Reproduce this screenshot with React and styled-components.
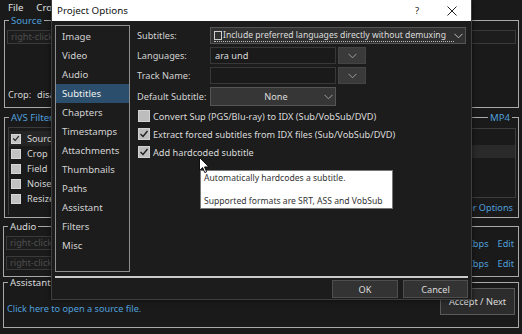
import React from 'react';
import styled, { createGlobalStyle } from 'styled-components';

const FONT = `"Noto Sans", "Open Sans", "Liberation Sans", sans-serif`;

const GlobalStyle = createGlobalStyle`
  html, body { margin: 0; padding: 0; background: #1a1a1a; }
  body { font-family: ${FONT}; }
`;

const Screen = styled.div`
  position: relative;
  width: 522px;
  height: 334px;
  overflow: hidden;
  background: #1a1a1a;
  color: #d6d6d6;
  font-family: ${FONT};
  font-size: 9.2px;
  display: flex;
  flex-direction: column;
`;

const MenuBar = styled.div`
  height: 15px;
  display: flex;
  align-items: center;
  gap: 13px;
  padding-left: 8px;
  font-size: 9.6px;
  color: #e2e2e2;
`;

const MainGrid = styled.div`
  display: grid;
  grid-template-columns: 250px 1fr 60px;
  grid-template-rows: 93px 106px;
  row-gap: 4px;
  column-gap: 6px;
  padding: 0 3px 0 4px;
`;

const Group = styled.fieldset`
  margin: 0;
  padding: ${p => p.$pad || '1px 2px 2px'};
  border: 1px solid #a9a9a9;
  min-width: 0;
  box-sizing: border-box;
  display: flex;
  flex-direction: column;
  grid-column: ${p => p.$span || 'auto'};
`;

const Legend = styled.legend`
  padding: 0 2px;
  margin-left: ${p => p.$offset || 2}px;
  line-height: 11px;
  font-size: 9.6px;
  color: ${p => (p.$blue ? '#4f9fdb' : '#dadada')};
`;

const TextField = styled.div`
  height: 14px;
  box-sizing: border-box;
  border: 1px solid #3a3a3a;
  background: #1d1d1d;
  color: #4e4e4e;
  padding-left: 3px;
  line-height: 12px;
  white-space: nowrap;
  overflow: hidden;
  width: ${p => p.$w || 'auto'};
  margin-top: ${p => p.$mt || 0}px;
`;

const CropRow = styled.div`
  margin-top: auto;
  margin-bottom: 4px;
  display: flex;
  gap: 6px;
  padding-left: 1px;
`;

const FilterList = styled.div`
  flex: 1;
  margin: 3px 0 0 1px;
  border-left: 1px solid #3c3c3c;
  border-top: 1px solid #3c3c3c;
  padding-top: 3px;
`;

const FilterItem = styled.div`
  height: 15px;
  display: flex;
  align-items: center;
  gap: 6px;
  padding-left: 2px;
  background: ${p => (p.$active ? '#252525' : 'transparent')};
`;

const SmallBox = styled.span`
  width: 10px;
  height: 10px;
  box-sizing: border-box;
  background: #c2c2c2;
  border: 1px solid #d6d6d6;
  display: flex;
  align-items: center;
  justify-content: center;
`;

const ContainerList = styled.div`
  flex: 1;
  margin-top: 4px;
  border: 1px solid #3c3c3c;
  padding-top: 16px;
`;

const ContainerRow = styled.div`
  height: 13px;
  background: #2a2a2a;
`;

const LinkText = styled.div`
  display: flex;
  justify-content: ${p => (p.$right ? 'flex-end' : 'flex-start')};
  color: #4f9fdb;
  white-space: nowrap;
  padding: ${p => p.$pad || '0'};
`;

const WideGroup = styled(Group)`
  margin: ${p => p.$margin || '0'};
  height: ${p => p.$h}px;
`;

const AudioLine = styled.div`
  display: flex;
  align-items: center;
  justify-content: space-between;
  height: 20px;
`;

const AudioInfo = styled.div`
  display: flex;
  gap: 9px;
  color: #4f9fdb;
  padding-right: 2px;
`;

const AssistantBody = styled.div`
  flex: 1;
  display: flex;
  align-items: center;
  justify-content: space-between;
  padding: 0 1px 4px 1px;
`;

const AcceptButton = styled.div`
  width: 75px;
  height: 27px;
  box-sizing: border-box;
  border: 1px solid #5a5a5a;
  background: #2c2c2c;
  color: #dcdcdc;
  display: flex;
  align-items: center;
  justify-content: center;
`;

/* ---------- dialog ---------- */

const Dialog = styled.div`
  position: absolute;
  left: 51px;
  top: 0;
  width: 421px;
  height: 300px;
  box-sizing: border-box;
  background: #1c1c1c;
  border: 1px solid #3e3e3e;
  border-top: none;
  display: flex;
  flex-direction: column;
  box-shadow: 0 0 5px rgba(0, 0, 0, 0.6);
`;

const TitleBar = styled.div`
  height: 21px;
  flex-shrink: 0;
  background: #ffffff;
  color: #111;
  display: flex;
  align-items: center;
  padding-left: 5px;
  font-size: 9.8px;
`;

const TitleText = styled.div`
  flex: 1;
`;

const TitleButton = styled.div`
  width: ${p => p.$w}px;
  display: flex;
  justify-content: center;
  align-items: center;
  color: #222;
  font-size: 9.5px;
`;

const DialogBody = styled.div`
  display: flex;
  gap: 7px;
  padding: 4px 3px 0 3px;
  height: 251px;
  box-sizing: border-box;
`;

const NavList = styled.div`
  width: 75px;
  height: 247px;
  flex-shrink: 0;
  box-sizing: border-box;
  border: 1px solid #8e8e8e;
  padding-top: 1px;
`;

const NavItem = styled.div`
  height: 19px;
  line-height: 19px;
  padding-left: 6px;
  font-size: 9.6px;
  color: ${p => (p.$active ? '#f0f0f0' : '#d2d2d2')};
  background: ${p => (p.$active ? '#2a4e6c' : 'transparent')};
`;

const Panel = styled.div`
  flex: 1;
  min-width: 0;
  display: flex;
  flex-direction: column;
  padding-top: 2px;
`;

const FormRow = styled.div`
  display: flex;
  align-items: center;
  height: ${p => p.$h || 17}px;
  margin-bottom: ${p => p.$mb ?? 3}px;
`;

const FieldLabel = styled.div`
  width: 73px;
  flex-shrink: 0;
  white-space: nowrap;
  color: #d2d2d2;
`;

const Combo = styled.div`
  flex: ${p => (p.$wide ? 1 : 'none')};
  min-width: 0;
  width: ${p => (p.$wide ? 'auto' : '126px')};
  height: 100%;
  box-sizing: border-box;
  border: 1px solid #555;
  background: ${p => (p.$wide ? '#303030' : '#363636')};
  display: flex;
  align-items: center;
  padding: 0 2px 0 3px;
  margin-right: ${p => (p.$wide ? 2 : 0)}px;
  color: #dcdcdc;
`;

const FocusText = styled.span`
  flex: 1;
  min-width: 0;
  display: flex;
  align-items: center;
  gap: 1px;
  white-space: nowrap;
  overflow: hidden;
  border-bottom: 1px dotted #bbb;
  line-height: 11px;
  font-size: 8.6px;
`;

const Square = styled.span`
  width: 6px;
  height: 7px;
  border: 1px solid #cfcfcf;
  flex-shrink: 0;
`;

const ComboValue = styled.span`
  flex: 1;
  text-align: center;
  padding-left: 14px;
`;

const Input = styled.div`
  width: 126px;
  height: 100%;
  box-sizing: border-box;
  border: 1px solid #383838;
  background: #1a1a1a;
  color: #dcdcdc;
  padding-left: 4px;
  display: flex;
  align-items: center;
`;

const MenuButton = styled.div`
  width: 28px;
  height: 100%;
  margin-left: 2px;
  background: #3a3a3a;
  border: 1px solid #444;
  box-sizing: border-box;
  display: flex;
  align-items: center;
  justify-content: center;
`;

const CheckRow = styled.div`
  display: flex;
  align-items: center;
  gap: 3px;
  height: 18px;
  padding-left: 1px;
  color: #dadada;
  white-space: nowrap;
`;

const CheckBox = styled.span`
  width: 12px;
  height: 12px;
  box-sizing: border-box;
  background: #bdbdbd;
  border: 1px solid #d2d2d2;
  display: flex;
  align-items: center;
  justify-content: center;
  flex-shrink: 0;
`;

const Separator = styled.div`
  height: 2px;
  background: #cacaca;
  margin: 4px 3px 0 3px;
`;

const ButtonRow = styled.div`
  display: flex;
  justify-content: flex-end;
  gap: 5px;
  padding: 2px 3px 0 0;
`;

const DialogButton = styled.div`
  width: ${p => p.$w}px;
  height: 18px;
  box-sizing: border-box;
  border: 1px solid #4e4e4e;
  background: #333;
  color: #dcdcdc;
  display: flex;
  align-items: center;
  justify-content: center;
`;

const Tooltip = styled.div`
  position: absolute;
  left: 200px;
  top: 170px;
  width: 193px;
  height: 39px;
  box-sizing: border-box;
  background: #fff;
  border: 1px solid #777;
  color: #333;
  font-size: 8.6px;
  padding: 2px 3px;
  line-height: 11.5px;
  white-space: nowrap;
`;

const Cursor = styled.svg`
  position: absolute;
  left: 199px;
  top: 157px;
`;

const Chevron = ({ color = '#a8a8a8' }) => (
  <svg width="9" height="6" viewBox="0 0 9 6">
    <polyline points="0.5,0.8 4.5,4.8 8.5,0.8" fill="none" stroke={color} strokeWidth="0.9" />
  </svg>
);

const Check = ({ size = 10 }) => (
  <svg width={size} height={size} viewBox="0 0 10 10">
    <polyline points="1.5,5 4,7.5 8.5,2" fill="none" stroke="#1e1e1e" strokeWidth="1.4" />
  </svg>
);

const navItems = ['Image', 'Video', 'Audio', 'Subtitles', 'Chapters', 'Timestamps', 'Attachments', 'Thumbnails', 'Paths', 'Assistant', 'Filters', 'Misc'];
const filters = [
  { name: 'Source', on: true },
  { name: 'Crop', on: false },
  { name: 'Field', on: false },
  { name: 'Noise', on: false },
  { name: 'Resize', on: false },
];

const App = () => {
  return (
    <Screen>
      <GlobalStyle />
      <MenuBar>
        <span>File</span>
        <span>Crop</span>
        <span>Preview</span>
        <span>Code</span>
      </MenuBar>

      <MainGrid>
        <Group>
          <Legend $blue>Source</Legend>
          <TextField $mt={3}>right-click for options</TextField>
          <CropRow>
            <span>Crop:</span>
            <span>disabled</span>
          </CropRow>
        </Group>
        <Group $span="2 / 4">
          <Legend $blue>Target</Legend>
          <TextField $mt={3}>&nbsp;</TextField>
        </Group>

        <Group>
          <Legend $blue>AVS Filters</Legend>
          <FilterList>
            {filters.map(f => (
              <FilterItem key={f.name} $active={f.on}>
                <SmallBox>{f.on && <Check size={9} />}</SmallBox>
                <span>{f.name}</span>
              </FilterItem>
            ))}
          </FilterList>
        </Group>
        <Group>
          <Legend $blue>x264</Legend>
        </Group>
        <Group>
          <Legend $blue $offset={26}>MP4</Legend>
          <ContainerList>
            <ContainerRow />
          </ContainerList>
          <LinkText $right $pad="3px 3px 1px 0">Container Options</LinkText>
        </Group>
      </MainGrid>

      <WideGroup $h={56} $margin="3px 3px 0 3px" $pad="1px 2px 2px">
        <Legend>Audio</Legend>
        <AudioLine>
          <TextField $w="200px">right-click for options</TextField>
          <AudioInfo><span>Kbps</span><span>Edit</span></AudioInfo>
        </AudioLine>
        <AudioLine>
          <TextField $w="200px">right-click for options</TextField>
          <AudioInfo><span>Kbps</span><span>Edit</span></AudioInfo>
        </AudioLine>
      </WideGroup>

      <WideGroup $h={51} $margin="0 3px 0 3px" $pad="0 2px">
        <Legend>Assistant</Legend>
        <AssistantBody>
          <LinkText $pad="14px 0 0 0">Click here to open a source file.</LinkText>
          <AcceptButton>Accept / Next</AcceptButton>
        </AssistantBody>
      </WideGroup>

      <Dialog>
        <TitleBar>
          <TitleText>Project Options</TitleText>
          <TitleButton $w={32}>?</TitleButton>
          <TitleButton $w={38}>
            <svg width="10" height="10" viewBox="0 0 10 10">
              <path d="M0.5 0.5 L9.5 9.5 M9.5 0.5 L0.5 9.5" stroke="#222" strokeWidth="1" />
            </svg>
          </TitleButton>
        </TitleBar>

        <DialogBody>
          <NavList>
            {navItems.map(n => (
              <NavItem key={n} $active={n === 'Subtitles'}>{n}</NavItem>
            ))}
          </NavList>

          <Panel>
            <FormRow>
              <FieldLabel>Subtitles:</FieldLabel>
              <Combo $wide>
                <FocusText>
                  <Square />
                  Include preferred languages directly without demuxing
                </FocusText>
                <Chevron color="#cfcfcf" />
              </Combo>
            </FormRow>
            <FormRow>
              <FieldLabel>Languages:</FieldLabel>
              <Input>ara und</Input>
              <MenuButton><Chevron /></MenuButton>
            </FormRow>
            <FormRow>
              <FieldLabel>Track Name:</FieldLabel>
              <Input />
              <MenuButton><Chevron /></MenuButton>
            </FormRow>
            <FormRow $h={19} $mb={1}>
              <FieldLabel>Default Subtitle:</FieldLabel>
              <Combo>
                <ComboValue>None</ComboValue>
                <Chevron />
              </Combo>
            </FormRow>
            <CheckRow>
              <CheckBox />
              Convert Sup (PGS/Blu-ray) to IDX (Sub/VobSub/DVD)
            </CheckRow>
            <CheckRow>
              <CheckBox><Check /></CheckBox>
              Extract forced subtitles from IDX files (Sub/VobSub/DVD)
            </CheckRow>
            <CheckRow>
              <CheckBox><Check /></CheckBox>
              Add hardcoded subtitle
            </CheckRow>
          </Panel>
        </DialogBody>

        <Separator />
        <ButtonRow>
          <DialogButton $w={66}>OK</DialogButton>
          <DialogButton $w={65}>Cancel</DialogButton>
        </ButtonRow>
      </Dialog>

      <Tooltip>
        <div>Automatically hardcodes a subtitle.</div>
        <div>&nbsp;</div>
        <div>Supported formats are SRT, ASS and VobSub</div>
      </Tooltip>

      <Cursor width="11" height="17" viewBox="0 0 11 17">
        <path d="M0.5 0.5 L0.5 13.5 L3.6 10.6 L5.8 15.6 L7.6 14.8 L5.5 9.9 L9.8 9.9 Z" fill="#fff" stroke="#000" strokeWidth="0.9" />
      </Cursor>
    </Screen>
  );
};

export default App;
